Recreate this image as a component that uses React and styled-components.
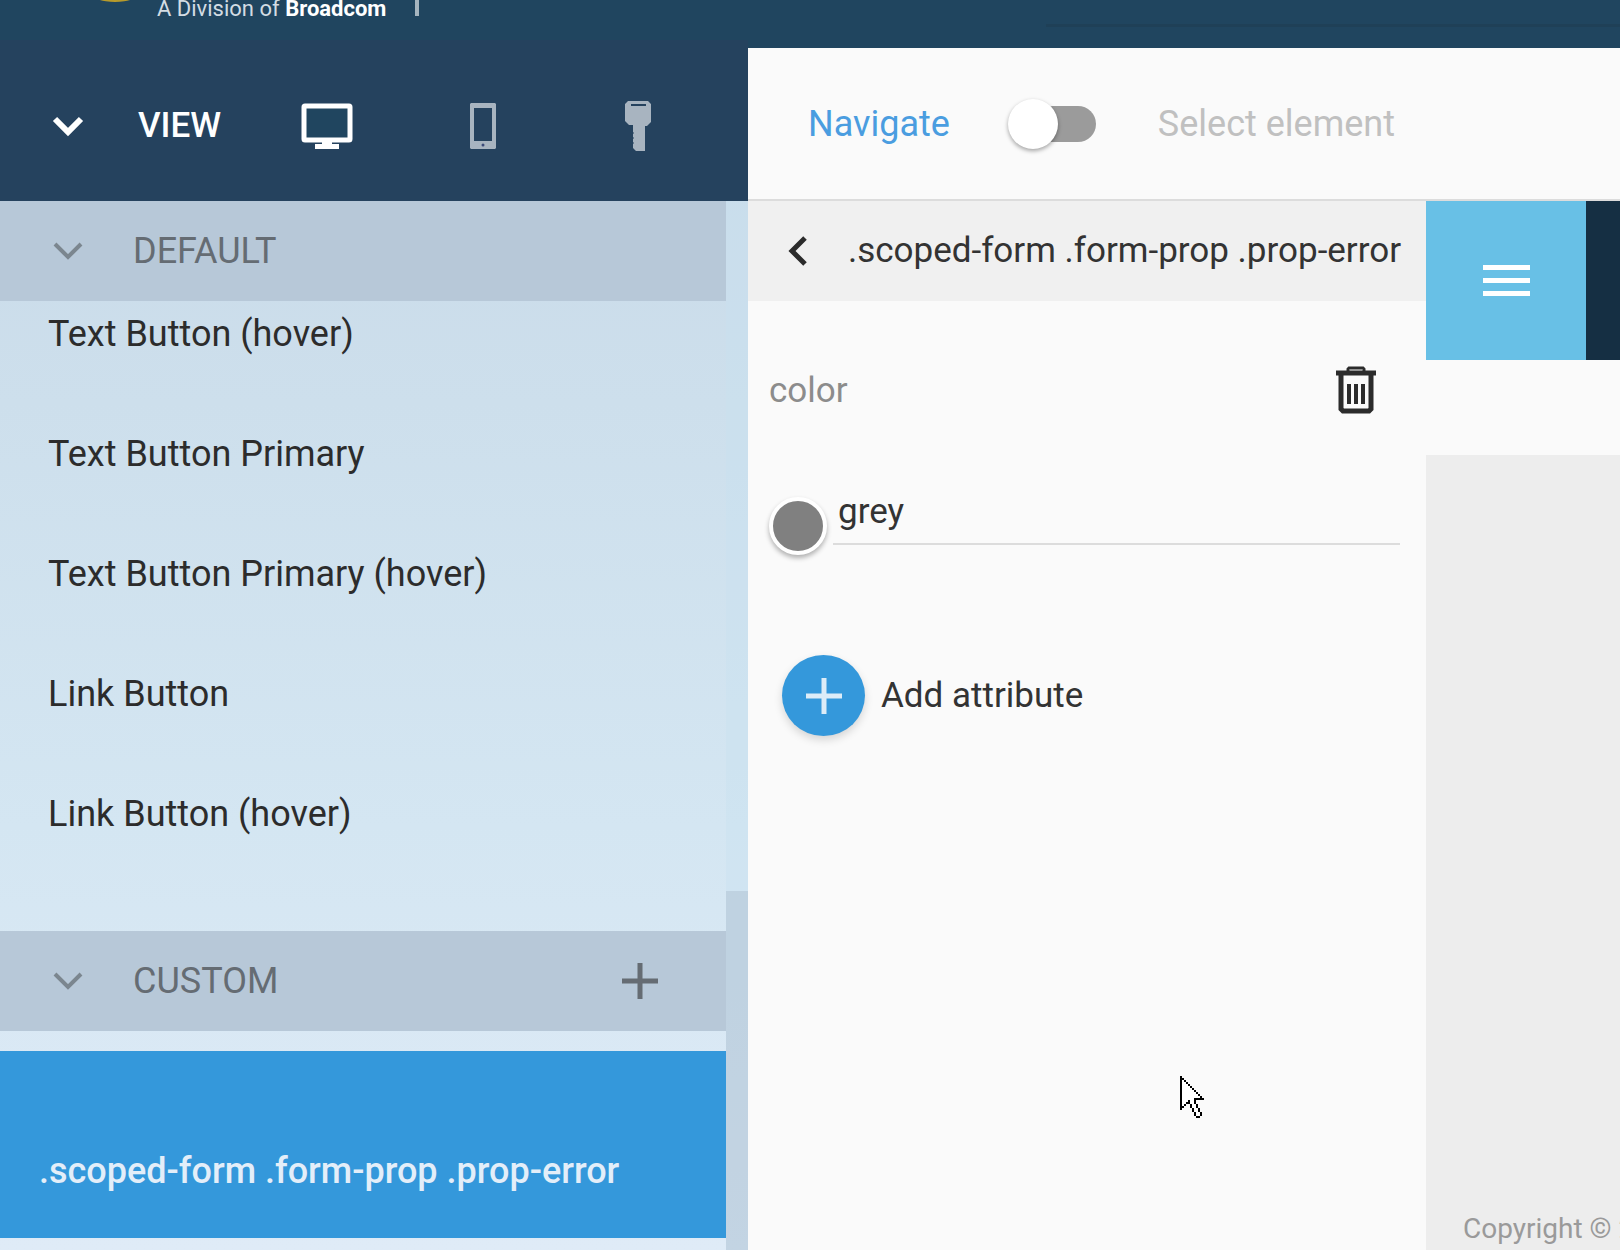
import styled, { createGlobalStyle } from 'styled-components';

const GlobalStyle = createGlobalStyle`
  * { box-sizing: border-box; }
  body {
    margin: 0;
    background: #fafafa;
    font-family: Roboto, "Liberation Sans", sans-serif;
    font-size: 36px;
    line-height: 40px;
    color: #333;
  }
  button, input {
    font: inherit;
    color: inherit;
    background: none;
    border: 0;
    padding: 0;
    margin: 0;
  }
  svg { display: block; flex: none; }
`;

const Page = styled.div`
  min-height: 100vh;
  display: flex;
  flex-direction: column;
`;

const TopBar = styled.header`
  height: 40px;
  display: flex;
  align-items: flex-start;
  padding-left: 86px;
  background: linear-gradient(#1f4057, #1f4057) 1046px 24px / 100% 3px no-repeat #20455f;
`;

const LogoMark = styled.svg`
  margin-right: 14px;
`;

const Tagline = styled.span`
  font-size: 22px;
  line-height: 18px;
  color: #d3dce3;
  b { color: #fff; }
`;

const Divider = styled.span`
  width: 4px;
  height: 16px;
  margin-left: 29px;
  background: #a6b5bf;
`;

const Main = styled.div`
  flex: 1;
  display: flex;
`;

const Sidebar = styled.aside`
  width: 748px;
  flex: none;
  display: flex;
  flex-direction: column;
  background: linear-gradient(#c8d9e8, #cddfec 30%, #d4e6f2 65%, #dfebf7);
`;

const ViewBar = styled.div`
  height: 161px;
  background: #25425e;
  color: #fff;
  display: flex;
  align-items: center;
  padding: 10px 84px 0 52px;
`;

const ViewTitle = styled.h1`
  margin: 0 0 0 54px;
  font: inherit;
  font-size: 35px;
  font-weight: 500;
`;

const IconButton = styled.button`
  display: grid;
  place-items: center;
  flex: none;
  width: ${p => p.$width || 52}px;
  height: 52px;
  color: ${p => p.$color || 'inherit'};
`;

const Devices = styled.div`
  flex: 1;
  display: flex;
  justify-content: space-between;
  padding-left: 80px;
`;

const Scroller = styled.div`
  flex: 1;
  display: flex;
`;

const List = styled.div`
  flex: 1;
  padding-bottom: 12px;
`;

const ScrollTrack = styled.div`
  width: 22px;
  padding-top: 690px;
  display: flex;
  background: rgba(200, 224, 240, .4);
`;

const ScrollThumb = styled.div`
  flex: 1;
  background: rgba(140, 155, 175, .25);
`;

const GroupHeader = styled.div`
  height: 100px;
  display: flex;
  align-items: center;
  padding: 0 60px 0 52px;
  background: #b7c8d8;
  color: #656c73;
`;

const GroupName = styled.h2`
  flex: 1;
  margin: 0 0 0 49px;
  font: inherit;
`;

const Items = styled.ul`
  list-style: none;
  margin: 0;
  padding: 0 0 30px;
`;

const Item = styled.li`
  display: flex;
  padding: 13px 0 67px 48px;
  color: #2c2c2c;
`;

const SelectedItem = styled.button`
  display: block;
  width: 100%;
  height: 187px;
  margin-top: 20px;
  padding: 53px 0 0 39px;
  text-align: left;
  color: #e3eef9;
  background: #3498db;
  font-weight: 500;
`;

const Workspace = styled.main`
  flex: 1;
  min-width: 0;
  display: flex;
  flex-direction: column;
  border-top: 8px solid #20455f;
`;

const ModeBar = styled.div`
  height: 153px;
  display: flex;
  align-items: center;
  padding-left: 60px;
  border-bottom: 2px solid #dcdcdc;
`;

const ModeLabel = styled.label`
  color: ${p => (p.$active ? '#4a9de0' : '#c0c0c0')};
`;

const Switch = styled.input.attrs({ type: 'checkbox', role: 'switch' })`
  appearance: none;
  display: flex;
  align-items: center;
  width: 88px;
  height: 36px;
  margin: 0 62px 0 58px;
  background: linear-gradient(#9b9b9b, #9b9b9b) 12px 0 / 100% 100% no-repeat;
  border-radius: 18px;
  &::before {
    content: '';
    width: 50px;
    height: 50px;
    flex: none;
    border-radius: 50%;
    background: #fff;
    box-shadow: 0 2px 4px rgba(0, 0, 0, .35);
  }
`;

const Columns = styled.div`
  flex: 1;
  display: flex;
`;

const StylePanel = styled.section`
  width: 678px;
  flex: none;
  font-size: 35px;
`;

const PanelHeader = styled.div`
  height: 100px;
  display: flex;
  align-items: center;
  padding-left: 24px;
  background: #f0f0f0;
`;

const PanelTitle = styled.h2`
  margin: 0 0 0 24px;
  font: inherit;
  white-space: nowrap;
`;

const PanelBody = styled.div`
  padding: 64px 26px 0 21px;
`;

const AttributeHead = styled.div`
  display: flex;
  align-items: center;
  justify-content: space-between;
  padding-right: 18px;
  color: #8c8c8c;
`;

const AttributeRow = styled.div`
  display: flex;
  align-items: flex-end;
  gap: 6px;
  margin-top: 74px;
`;

const Swatch = styled.button`
  width: 58px;
  height: 58px;
  flex: none;
  margin-bottom: -10px;
  border: 4px solid #fff;
  border-radius: 50%;
  background: ${p => p.$color};
  box-shadow: 0 3px 5px rgba(0, 0, 0, .3);
`;

const ValueInput = styled.input`
  flex: 1;
  min-width: 0;
  height: 54px;
  padding: 0 5px 12px;
  border-bottom: 2px solid #dcdcdc;
  outline: 0;
`;

const AddRow = styled.div`
  display: flex;
  align-items: center;
  gap: 16px;
  margin: 110px 0 0 13px;
`;

const AddButton = styled.button`
  width: 83px;
  height: 81px;
  display: grid;
  place-items: center;
  border-radius: 50%;
  background: #3498db;
  color: #dcecf8;
  box-shadow: 0 4px 8px rgba(0, 0, 0, .15);
`;

const Preview = styled.section`
  flex: 1;
  min-width: 0;
  display: flex;
  flex-direction: column;
`;

const PreviewHeader = styled.div`
  height: 159px;
  margin-bottom: 95px;
  display: flex;
  background: #152f43;
`;

const MenuButton = styled.button`
  width: 160px;
  flex: none;
  display: grid;
  place-items: center;
  color: #fff;
  background: #68c0e6;
`;

const PreviewBody = styled.div`
  flex: 1;
  display: flex;
  align-items: flex-end;
  padding: 0 0 5px 37px;
  background: #ededed;
  overflow: hidden;
`;

const Copyright = styled.span`
  font-size: 28px;
  line-height: 32px;
  color: #9a9a9a;
  white-space: nowrap;
`;

const CursorSvg = styled.svg`
  position: absolute;
  left: 1180px;
  top: 1076px;
  pointer-events: none;
`;

const items = [
  'Text Button (hover)',
  'Text Button Primary',
  'Text Button Primary (hover)',
  'Link Button',
  'Link Button (hover)',
];

// x = black, o = white
const cursorRows = [
  'x',
  'xx',
  'xox',
  'xoox',
  'xooox',
  'xoooox',
  'xooooox',
  'xoooooox',
  'xooooooox',
  'xoooooooox',
  'xooooooooox',
  'xooooooxxxxx',
  'xoooxoox',
  'xooxxoox',
  'xox  xoox',
  'xx   xoox',
  'x     xoox',
  '      xoox',
  '       xoox',
  '       xoox',
  '        xx',
];

function Cursor() {
  const pixels = cursorRows.flatMap((row, y) => (
    [...row].map((c, x) => c !== ' ' && (
      <rect key={x + '-' + y} x={x} y={y} width="1" height="1" fill={c === 'x' ? '#000' : '#fff'} />
    ))
  ));

  return (
    <CursorSvg width="24" height="42" viewBox="0 0 12 21" shapeRendering="crispEdges">
      {pixels}
    </CursorSvg>
  );
}

function Chevron({ width = 5 }) {
  return (
    <svg width="32" height="22" viewBox="0 0 32 22" fill="none" stroke="currentColor" strokeWidth={width}>
      <path d="M3 4l13 13L29 4" />
    </svg>
  );
}

function Plus() {
  return (
    <svg width="36" height="36" viewBox="0 0 36 36" stroke="currentColor" strokeWidth="5">
      <path d="M18 0v36M0 18h36" />
    </svg>
  );
}

function Group({ name, canAdd }) {
  return (
    <GroupHeader>
      <IconButton $width={32} $color="#7b868f" aria-label={'Toggle ' + name}><Chevron width={4} /></IconButton>
      <GroupName>{name}</GroupName>
      {canAdd && <IconButton aria-label="Add custom"><Plus /></IconButton>}
    </GroupHeader>
  );
}

function DeviceButtons() {
  return (
    <Devices>
      <IconButton aria-label="Desktop">
        <svg width="52" height="48" viewBox="0 0 52 48">
          <rect x="3" y="4" width="46" height="34" rx="1" fill="#20455f" stroke="currentColor" strokeWidth="5" />
          <path d="M21 38h10v4h7v5H14v-5h7z" fill="currentColor" />
        </svg>
      </IconButton>
      <IconButton aria-label="Phone" $color="#a8b4c0">
        <svg width="28" height="48" viewBox="0 0 28 48">
          <path fillRule="evenodd" fill="currentColor" d="M2 1h24l1 1v44l-1 1H2l-1-1V2zM5 6v33h18V6z" />
          <circle cx="14" cy="43" r="1.5" fill="#3b4a78" />
        </svg>
      </IconButton>
      <IconButton aria-label="Key" $color="#a8b4c0">
        <svg width="26" height="52" viewBox="0 0 26 52">
          <path
            fillRule="evenodd"
            fill="currentColor"
            d="M3 1h20l3 3v18l-4 4h-2v25h-9l-3-3v-4l1-1-1-1v-3l1-1-1-1v-3l1-1-1-1v-7H4l-4-4V4zM6 4v2h15V4z"
          />
        </svg>
      </IconButton>
    </Devices>
  );
}

function StyleEditor() {
  return (
    <StylePanel>
      <PanelHeader>
        <IconButton aria-label="Back">
          <svg width="20" height="32" viewBox="0 0 20 32" fill="none" stroke="#2b2b2b" strokeWidth="5">
            <path d="M17 3L4 16l13 13" />
          </svg>
        </IconButton>
        <PanelTitle>.scoped-form .form-prop .prop-error</PanelTitle>
      </PanelHeader>
      <PanelBody>
        <AttributeHead>
          <label htmlFor="color">color</label>
          <IconButton aria-label="Delete color" $color="#2b2b2b">
            <svg width="40" height="50" viewBox="0 0 40 50" fill="none" stroke="currentColor">
              <path strokeWidth="3" d="M12 6V3l1-1h14l1 1v3" />
              <path strokeWidth="5" d="M0 7h40M5 9v34l2 2h26l2-2V9" />
              <path strokeWidth="4" d="M13 18v20M20 18v20M27 18v20" />
            </svg>
          </IconButton>
        </AttributeHead>
        <AttributeRow>
          <Swatch $color="#808080" aria-label="Pick color" />
          <ValueInput id="color" defaultValue="grey" />
        </AttributeRow>
        <AddRow>
          <AddButton id="add"><Plus /></AddButton>
          <label htmlFor="add">Add attribute</label>
        </AddRow>
      </PanelBody>
    </StylePanel>
  );
}

export default function App() {
  return (
    <Page>
      <GlobalStyle />
      <TopBar>
        <LogoMark width="57" height="4" viewBox="0 0 57 4">
          <ellipse cx="29" cy="-7" rx="24" ry="9" fill="#b79a2b" />
        </LogoMark>
        <Tagline>A Division of <b>Broadcom</b></Tagline>
        <Divider />
      </TopBar>
      <Main>
        <Sidebar>
          <ViewBar>
            <IconButton $width={32} aria-label="Toggle view"><Chevron width={6} /></IconButton>
            <ViewTitle>VIEW</ViewTitle>
            <DeviceButtons />
          </ViewBar>
          <Scroller>
            <List>
              <Group name="DEFAULT" />
              <Items>{items.map(x => <Item key={x}>{x}</Item>)}</Items>
              <Group name="CUSTOM" canAdd />
              <SelectedItem>.scoped-form .form-prop .prop-error</SelectedItem>
            </List>
            <ScrollTrack><ScrollThumb /></ScrollTrack>
          </Scroller>
        </Sidebar>
        <Workspace>
          <ModeBar>
            <ModeLabel $active htmlFor="mode">Navigate</ModeLabel>
            <Switch id="mode" />
            <ModeLabel htmlFor="mode">Select element</ModeLabel>
          </ModeBar>
          <Columns>
            <StyleEditor />
            <Preview>
              <PreviewHeader>
                <MenuButton aria-label="Menu">
                  <svg width="47" height="31" viewBox="0 0 47 31" fill="currentColor">
                    <path d="M0 0h47v5H0zM0 13h47v5H0zM0 26h47v5H0z" />
                  </svg>
                </MenuButton>
              </PreviewHeader>
              <PreviewBody><Copyright>Copyright © 2</Copyright></PreviewBody>
            </Preview>
          </Columns>
        </Workspace>
      </Main>
      <Cursor />
    </Page>
  );
}
